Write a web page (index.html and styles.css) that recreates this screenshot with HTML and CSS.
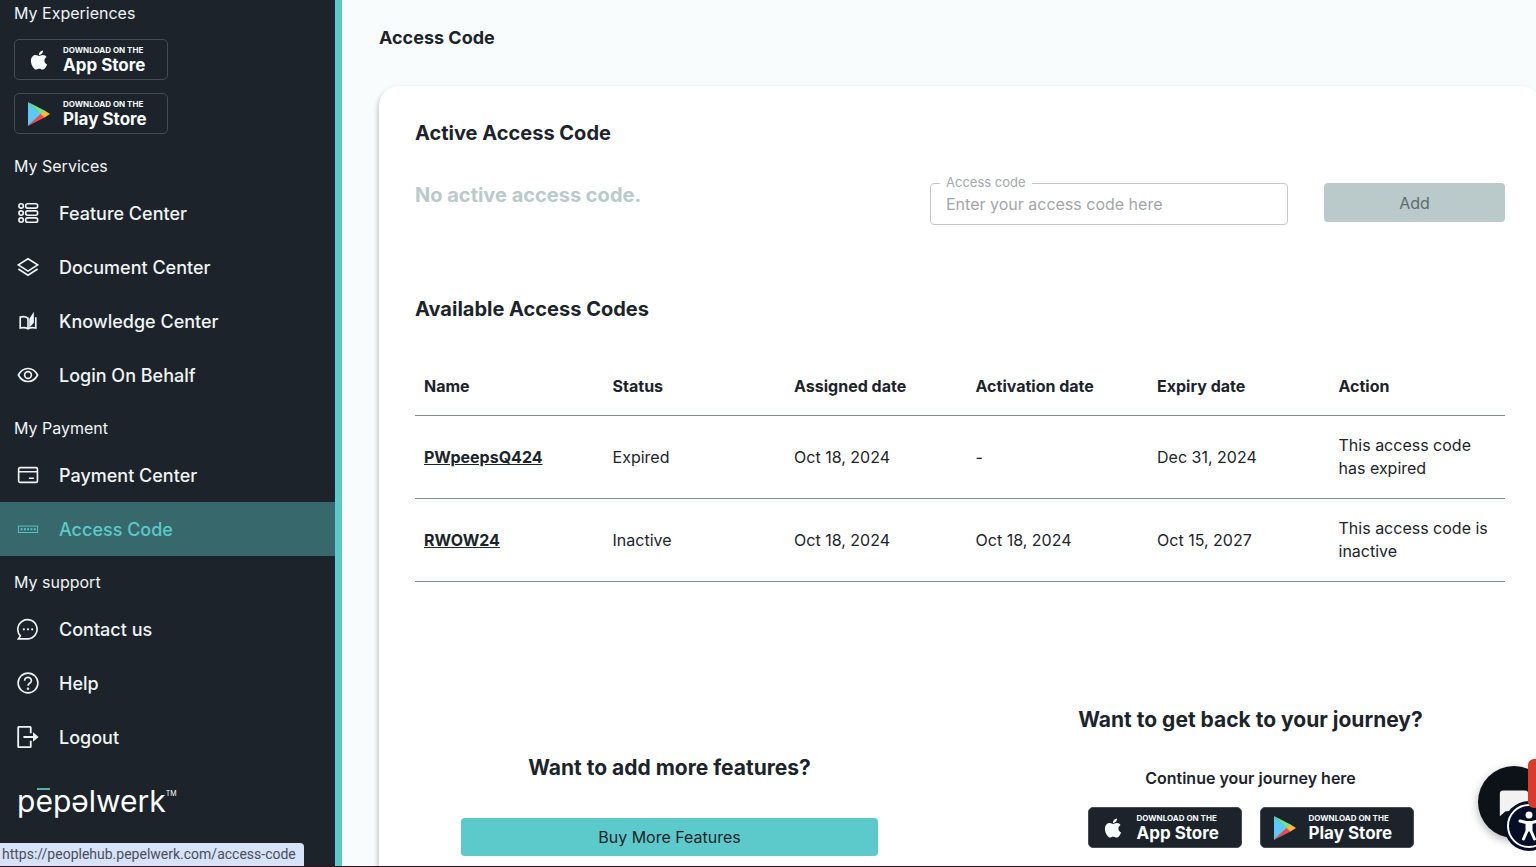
FILE: index.html
```html
<!DOCTYPE html>
<html lang="en">
<head>
    <meta charset="UTF-8">
    <meta name="viewport" content="width=device-width, initial-scale=1.0">
    <title>Access Code</title>
    <link rel="stylesheet" href="styles.css">
</head>
<body>
    <!-- shared store icons -->
    <svg class="defs" width="0" height="0" aria-hidden="true">
        <symbol id="apple" viewBox="0 0 384 512">
            <path fill="#f8fcfd" d="M318.7 268.7c-.2-36.7 16.4-64.4 50-84.8-18.8-26.9-47.2-41.7-84.7-44.6-35.5-2.8-74.3 20.7-88.5 20.7-15 0-49.4-19.7-76.4-19.7C63.3 141.2 4 184.8 4 273.5q0 39.3 14.4 81.2c12.8 36.7 59 126.7 107.2 125.2 25.2-.6 43-17.9 75.8-17.9 31.8 0 48.3 17.9 76.4 17.9 48.6-.7 90.4-82.5 102.6-119.3-65.2-30.7-61.7-90-61.7-91.9zm-56.6-164.2c27.3-32.4 24.8-61.9 24-72.5-24.1 1.4-52 16.4-67.9 34.9-17.5 19.8-27.8 44.3-25.6 71.9 26.1 2 49.9-11.4 69.5-34.3z"/>
        </symbol>
        <symbol id="play" viewBox="0 0 22 24">
            <path fill="#5bc9fa" d="M0 0v24l13-12z"/>
            <path fill="#6ee58a" d="M0 0l17 8.700-4 3.800z"/>
            <path fill="#ef4b4b" d="M0 24l13-12.500 4 3.800z"/>
            <path fill="#f7b93e" d="M16.500 8.400l5.500 3.600-5.500 3.600-4-3.600z"/>
        </symbol>
    </svg>

    <div class="layout">
        <nav class="sidebar">
            <h3 class="first">My Experiences</h3>
            <div class="side-stores">
                <a class="store" href="#">
                    <svg class="apple"><use href="#apple"/></svg>
                    <span><small>DOWNLOAD ON THE</small>App Store</span>
                </a>
                <a class="store" href="#">
                    <svg class="play"><use href="#play"/></svg>
                    <span><small>DOWNLOAD ON THE</small>Play Store</span>
                </a>
            </div>

            <h3>My Services</h3>
            <a class="item" href="#">
                <svg viewBox="0 0 24 24"><circle cx="4.500" cy="4.300" r="2.400"/><circle cx="4.500" cy="12" r="2.400"/><circle cx="4.500" cy="19.700" r="2.400"/><rect x="9.500" y="1.900" width="13" height="4.800" rx="2"/><rect x="9.500" y="9.600" width="13" height="4.800" rx="2"/><rect x="9.500" y="17.300" width="13" height="4.800" rx="2"/></svg>
                Feature Center
            </a>
            <a class="item" href="#">
                <svg viewBox="0 0 24 24"><path d="M12 3L22.500 9.700 12 16.500 1.500 9.700z"/><path d="M1.500 14.200L12 21l10.500-6.800"/></svg>
                Document Center
            </a>
            <a class="item" href="#">
                <svg viewBox="0 0 24 24"><path d="M12 19.500V9C9.500 7 6 7 3.500 7.800v11.900c3-.8 6-.8 8.500.8 2.500-1.600 5.500-1.600 8.500-.8V8"/><path class="solid" d="M14.200 10L17.500 5v8.500l-3.300 3.500z"/></svg>
                Knowledge Center
            </a>
            <a class="item" href="#">
                <svg viewBox="0 0 24 24"><path d="M1.500 12C6.500 2.500 17.500 2.500 22.500 12 17.500 21.500 6.500 21.500 1.500 12z"/><circle cx="12" cy="12" r="3.700"/></svg>
                Login On Behalf
            </a>

            <h3>My Payment</h3>
            <a class="item" href="#">
                <svg viewBox="0 0 24 24"><rect x="1.800" y="4" width="20.500" height="16" rx="1.500"/><path d="M2 8.500h20M13 15.500h5.500"/></svg>
                Payment Center
            </a>
            <a class="item active" href="#">
                <svg viewBox="0 0 24 24"><rect class="thin" x="1.500" y="8.800" width="21" height="7"/><path class="dots" d="M4 12.300h16.500"/></svg>
                Access Code
            </a>

            <h3>My support</h3>
            <a class="item" href="#">
                <svg viewBox="0 0 24 24"><path d="M1.500 22.800l2.200-3.300A10.500 10.500 0 1 1 12 22.800z"/><path class="chat-dots" d="M7.500 12.300h.01M12 12.300h.01M16.500 12.300h.01"/></svg>
                Contact us
            </a>
            <a class="item" href="#">
                <svg viewBox="0 0 24 24"><circle cx="12" cy="12" r="10.800"/><path d="M8.300 9.500c0-5 7.600-4.600 7.400 0-.1 2.800-3.700 2.800-3.700 5.500"/><circle class="solid" cx="12" cy="18.300" r=".5"/></svg>
                Help
            </a>
            <a class="item" href="#">
                <svg class="bold" viewBox="0 0 24 24"><path d="M15 8V2c0-.8-.4-1.200-1.200-1.200H2.500c-.8 0-1.200.4-1.200 1.200v20c0 .8.4 1.200 1.200 1.200h11.300c.8 0 1.200-.4 1.200-1.200v-6M7 12h13"/><path class="solid" d="M18.500 9l3.500 3-3.500 3z"/></svg>
                Logout
            </a>
            <div class="logo">p<span class="bar">e</span>pəlwerk<sup>TM</sup></div>
        </nav>

        <main>
            <h1>Access Code</h1>
            <section class="card">
                <h2>Active Access Code</h2>
                <form class="code-form">
                    <p>No active access code.</p>
                    <div class="field">
                        <label for="code">Access code</label>
                        <input type="text" id="code" placeholder="Enter your access code here">
                    </div>
                    <button type="button" class="add" disabled>Add</button>
                </form>

                <h2>Available Access Codes</h2>
                <table>
                    <thead>
                        <tr>
                            <th class="col-name">Name</th>
                            <th>Status</th>
                            <th>Assigned date</th>
                            <th>Activation date</th>
                            <th>Expiry date</th>
                            <th class="col-action">Action</th>
                        </tr>
                    </thead>
                    <tbody>
                        <tr>
                            <td><a href="#">PWpeepsQ424</a></td>
                            <td>Expired</td>
                            <td>Oct 18, 2024</td>
                            <td>-</td>
                            <td>Dec 31, 2024</td>
                            <td>This access code has expired</td>
                        </tr>
                        <tr>
                            <td><a href="#">RWOW24</a></td>
                            <td>Inactive</td>
                            <td>Oct 18, 2024</td>
                            <td>Oct 18, 2024</td>
                            <td>Oct 15, 2027</td>
                            <td>This access code is inactive</td>
                        </tr>
                    </tbody>
                </table>

                <div class="more">
                    <div class="features">
                        <h2>Want to add more features?</h2>
                        <button type="button" class="buy">Buy More Features</button>
                    </div>
                    <div class="journey">
                        <h2>Want to get back to your journey?</h2>
                        <p>Continue your journey here</p>
                        <div class="stores">
                            <a class="store" href="#">
                                <svg class="apple"><use href="#apple"/></svg>
                                <span><small>DOWNLOAD ON THE</small>App Store</span>
                            </a>
                            <a class="store" href="#">
                                <svg class="play"><use href="#play"/></svg>
                                <span><small>DOWNLOAD ON THE</small>Play Store</span>
                            </a>
                        </div>
                    </div>
                </div>
            </section>
        </main>
    </div>

    <!-- floating widgets -->
    <button type="button" class="chat" aria-label="Chat">
        <svg viewBox="0 0 36 36"><path fill="#f2f2f2" d="M5 3h26a4 4 0 0 1 4 4v17a4 4 0 0 1-4 4H8l-7 6V7a4 4 0 0 1 4-4z"/></svg>
    </button>
    <button type="button" class="access" aria-label="Accessibility">
        <svg viewBox="0 0 50 50"><circle cx="25" cy="25" r="21" fill="none" stroke="#fff" stroke-width="2"/><circle cx="25" cy="14" r="3.500" fill="#fff"/><path d="M16 20l6 1.500h6l6-1.500M25 22v7M23 22v8l-3.500 8M27 22v8l3.500 8" fill="none" stroke="#fff" stroke-width="3" stroke-linecap="round"/></svg>
    </button>
    <div class="alert"></div>
    <div class="status">https://peoplehub.pepelwerk.com/access-code</div>
    <div class="edge"></div>
</body>
</html>
```
FILE: styles.css
```css
* {
    box-sizing: border-box;
}

body {
    margin: 0;
    font-family: Inter, "Liberation Sans", sans-serif;
    font-size: 16px;
    color: #1c242b;
    background-color: #f8fcfd;
    overflow: hidden;
}

h1, h2, h3, p {
    margin: 0;
}

a {
    color: inherit;
}

button {
    font-family: inherit;
    border: none;
    padding: 0;
}

.defs {
    position: absolute;
}

.layout {
    display: flex;
    height: 100vh;
    overflow: hidden;
}

/* Sidebar */
.sidebar {
    flex: 0 0 342px;
    background-color: #1c232a;
    border-right: 7px solid #5ccaca;
    color: #f0f4f5;
}

.sidebar h3 {
    height: 46px;
    padding: 16px 14px 0;
    font-size: 16px;
    line-height: 20px;
    font-weight: 400;
}

.sidebar h3.first {
    height: 39px;
    padding-top: 3px;
}

.side-stores {
    display: flex;
    flex-direction: column;
    align-items: flex-start;
    gap: 13px;
    padding: 0 14px 6px;
}

.store {
    display: flex;
    align-items: center;
    width: 154px;
    height: 41px;
    padding-left: 12px;
    border: 1px solid #454c52;
    border-radius: 5px;
    background-color: #1c232a;
    color: #f8fcfd;
    font-size: 17px;
    line-height: 18px;
    font-weight: 700;
    text-decoration: none;
}

.store svg {
    width: 24px;
    height: 24px;
    margin-right: 12px;
}

.store .apple {
    height: 22px;
}

.store small {
    display: block;
    font-size: 8px;
    line-height: 11px;
}

.item {
    display: flex;
    align-items: center;
    gap: 20px;
    height: 54px;
    padding-left: 17px;
    font-size: 18px;
    font-weight: 500;
    text-decoration: none;
}

.item svg {
    width: 22px;
    height: 22px;
    fill: none;
    stroke: currentColor;
    stroke-width: 1.8;
}

.item .solid {
    fill: currentColor;
}

.item .bold {
    stroke-width: 2;
}

.item .thin {
    stroke-width: 1;
}

.item .dots {
    stroke-width: 2;
    stroke-dasharray: 2 1.6;
}

.item .chat-dots {
    stroke-width: 2.4;
    stroke-linecap: round;
}

.item.active {
    background-color: #36686c;
    color: #5ccaca;
}

.logo {
    padding: 17px;
    font-size: 30px;
    line-height: 40px;
    font-weight: 400;
    color: #ffffff;
}

.logo sup {
    font-size: 7px;
    line-height: 8px;
    vertical-align: 16px;
}

.logo .bar {
    position: relative;
}

.logo .bar::before {
    content: "";
    position: absolute;
    left: 2px;
    top: 5px;
    width: 13px;
    height: 2px;
    background-color: #4fb5a5;
}

/* Content */
main {
    flex: 1;
    min-width: 0;
    padding-left: 37px;
    margin-right: -5px;
}

h1 {
    padding: 26px 0 36px;
    font-size: 18px;
    line-height: 24px;
}

h2 {
    font-size: 20px;
    line-height: 28px;
}

.card {
    padding: 33px 36px;
    background-color: #ffffff;
    border-radius: 20px;
    box-shadow: -1px 3px 5px rgba(0, 0, 0, 0.25);
}

.code-form {
    display: grid;
    grid-template-columns: 479fr 358fr 181fr;
    gap: 36px;
    align-items: start;
    padding: 36px 0 70px;
}

.code-form p {
    font-size: 20px;
    line-height: 24px;
    font-weight: 700;
    color: #bacaca;
}

.field {
    position: relative;
}

.field label {
    position: absolute;
    left: 10px;
    top: -9px;
    padding: 0 6px;
    background-color: #ffffff;
    color: #a2a8ab;
    font-size: 13px;
    line-height: 16px;
}

.field input {
    display: block;
    width: 100%;
    height: 42px;
    padding: 0 15px;
    border: 1px solid #c4c8ca;
    border-radius: 4px;
    font-family: inherit;
    font-size: 16px;
}

.field input::placeholder {
    color: #a2a6a8;
}

.add {
    height: 39px;
    border-radius: 4px;
    background-color: #bacaca;
    color: #5f6b6d;
    font-size: 16px;
}

/* Table */
table {
    width: 100%;
    margin-top: 34px;
    table-layout: fixed;
    border-collapse: collapse;
}

th, td {
    padding: 18px 9px;
    border-bottom: 1px solid #848a8c;
    line-height: 23px;
    text-align: left;
}

th {
    padding-bottom: 17px;
}

.col-name {
    width: 17.3%;
}

.col-action {
    width: 16.1%;
}

td a {
    font-weight: 700;
}

/* Bottom blocks */
.more {
    display: grid;
    grid-template-columns: 1fr 1fr;
    gap: 72px;
    padding-top: 124px;
    text-align: center;
}

.more h2 {
    font-size: 21px;
}

.features {
    padding: 48px 46px 0;
}

.buy {
    width: 100%;
    height: 38px;
    margin-top: 36px;
    border-radius: 4px;
    background-color: #5ccaca;
    color: #1c242b;
    font-size: 16px;
}

.journey p {
    padding: 32px 0 17px;
    font-weight: 600;
    line-height: 24px;
}

.stores {
    display: flex;
    justify-content: center;
    gap: 18px;
    text-align: left;
}

/* Floating widgets */
.chat, .access, .alert, .status, .edge {
    position: fixed;
}

.chat {
    right: -14px;
    bottom: 29px;
    width: 72px;
    height: 72px;
    padding-top: 4px;
    border-radius: 50%;
    background-color: #0d1118;
    box-shadow: 0 3px 10px rgba(0, 0, 0, 0.3);
}

.chat svg {
    width: 30px;
    height: 34px;
}

.alert {
    right: -20px;
    bottom: 59px;
    width: 28px;
    height: 49px;
    border-radius: 6px;
    background-color: #d93a2b;
}

.access {
    right: -18px;
    bottom: 16px;
    width: 50px;
    height: 50px;
    border-radius: 50%;
    background-color: #050d27;
}

.access svg {
    display: block;
}

.status {
    left: 0;
    bottom: 1px;
    height: 23px;
    padding: 0 8px 0 2px;
    border-top-right-radius: 4px;
    background-color: #d7e2fb;
    color: #4a4f57;
    font-family: Roboto, sans-serif;
    font-size: 14px;
    line-height: 23px;
}

.edge {
    left: 0;
    right: 0;
    bottom: 0;
    height: 1px;
    background-color: #3a0d1e;
}
```
